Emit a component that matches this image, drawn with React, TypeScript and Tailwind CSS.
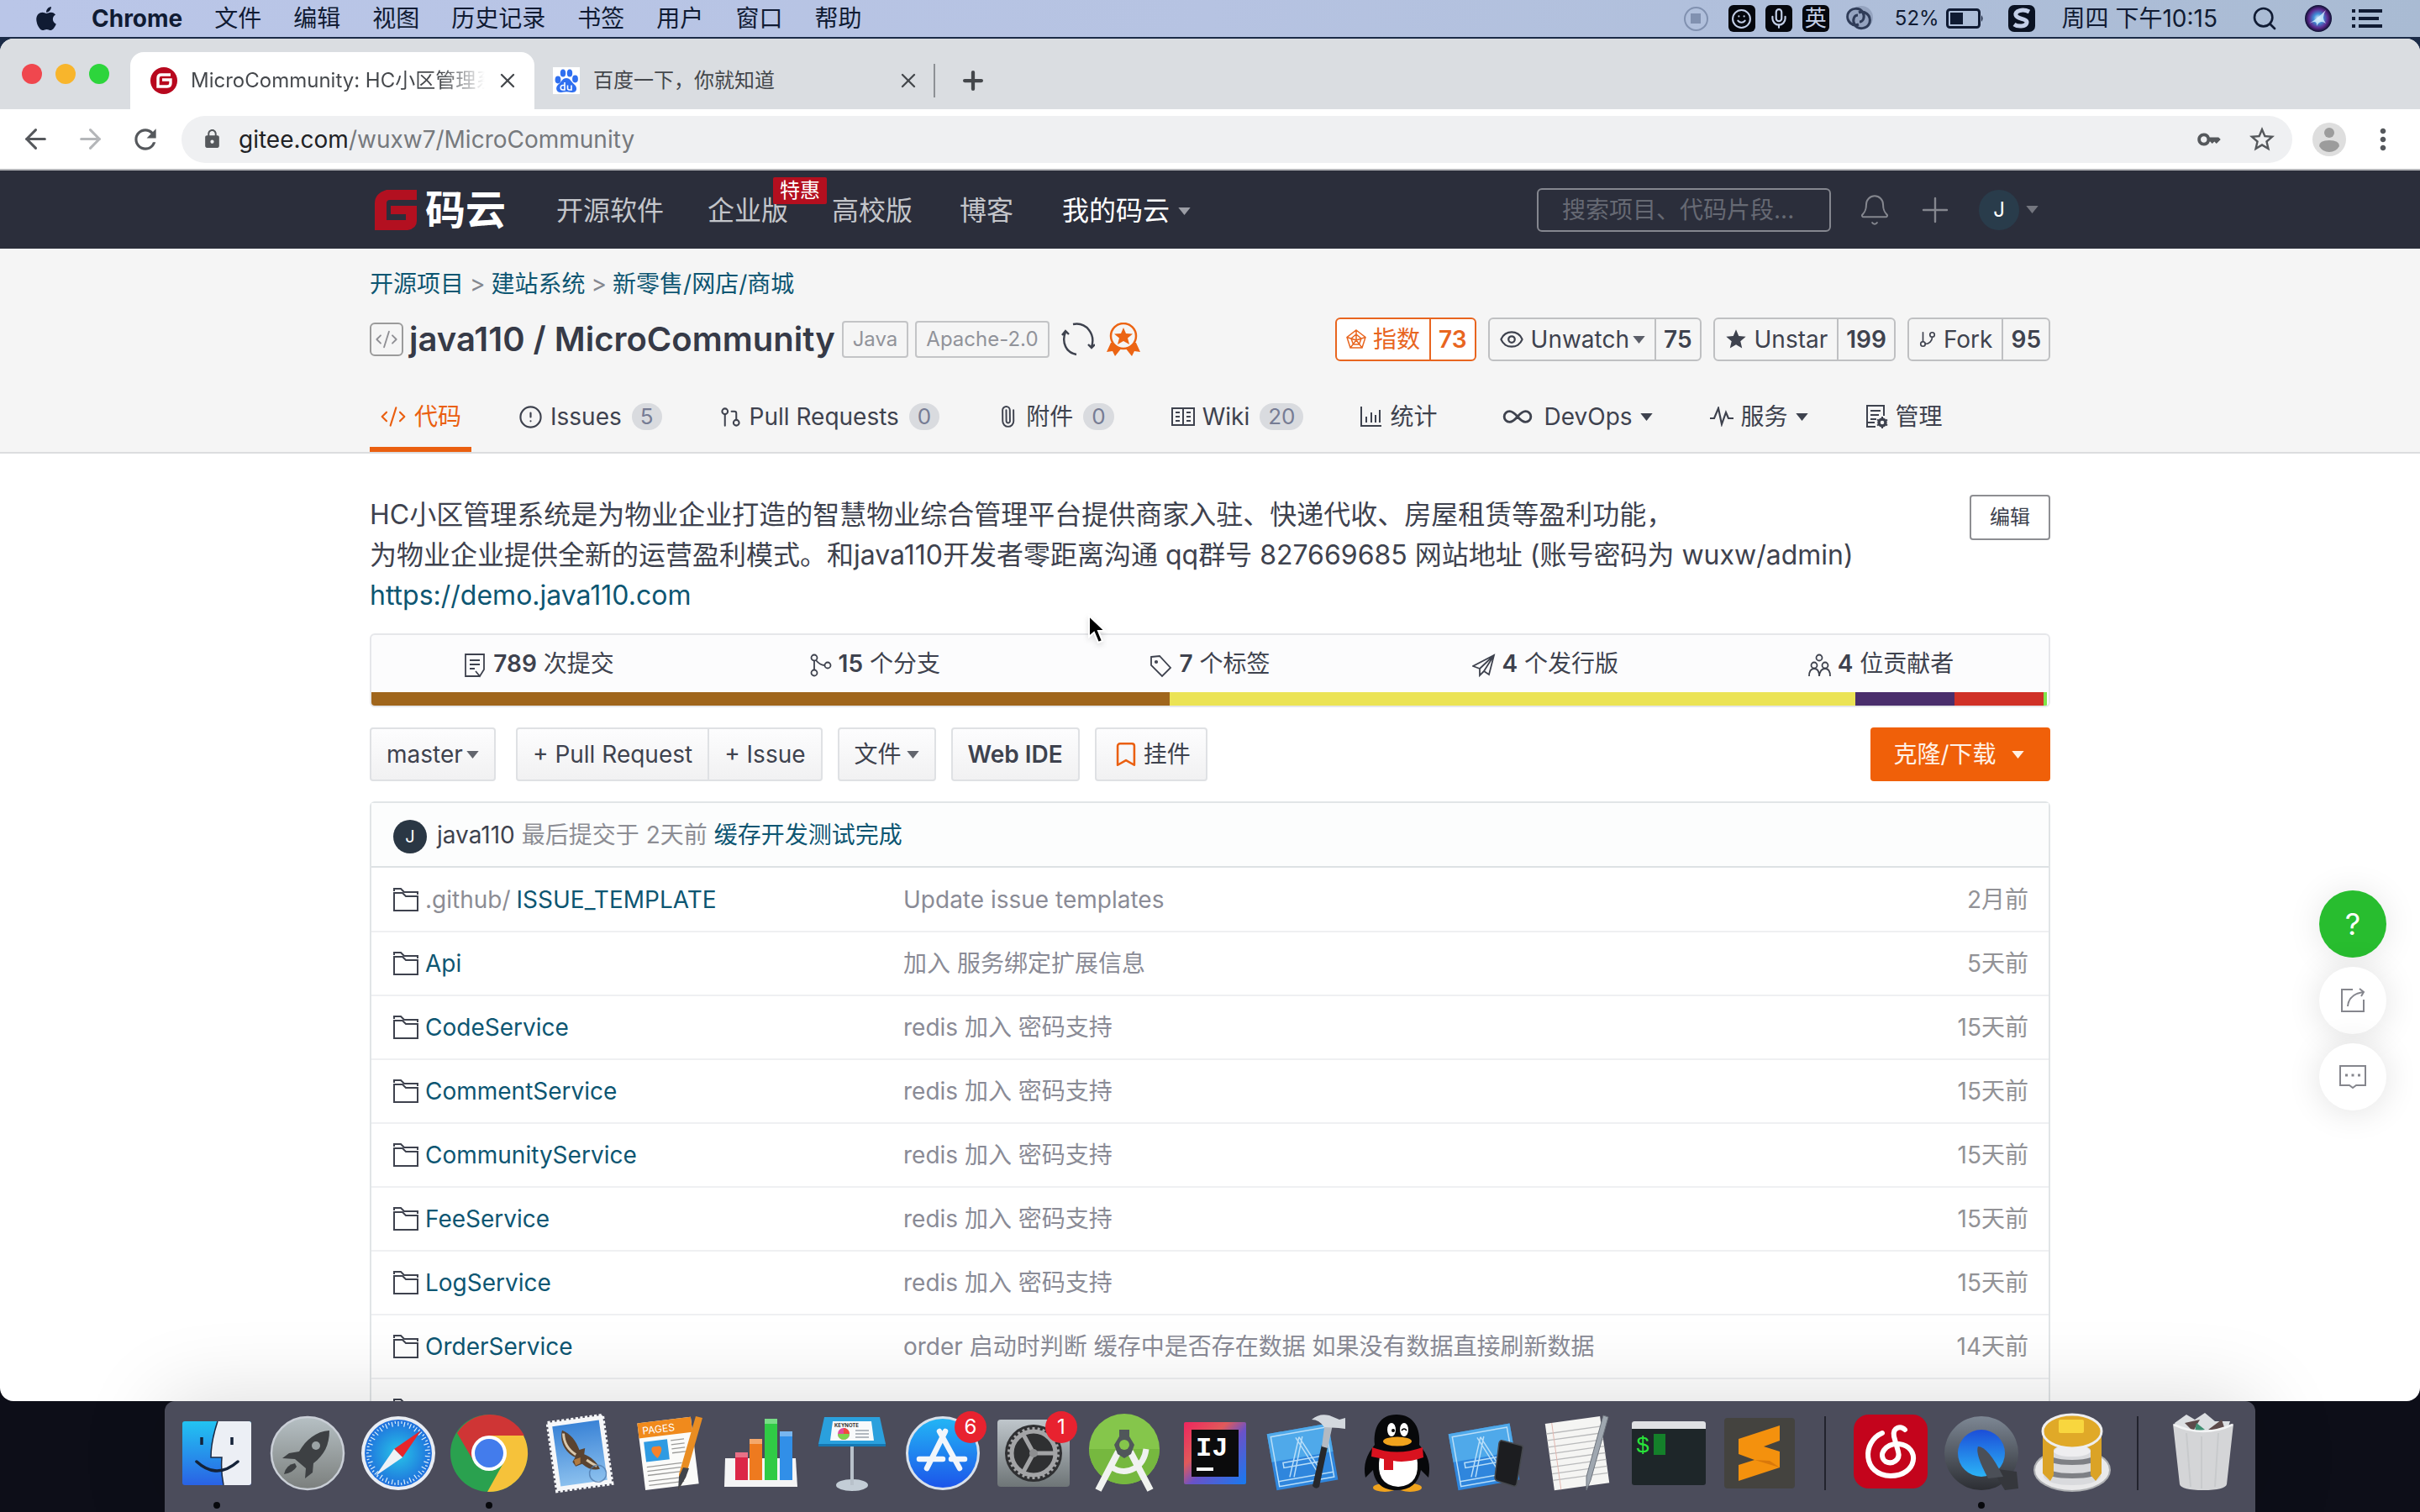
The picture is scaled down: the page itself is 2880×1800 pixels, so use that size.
import type { ReactNode } from "react";
import {
  ArrowLeft,
  ArrowRight,
  Bell,
  Bookmark,
  CircleAlert,
  CodeXml,
  Eye,
  GitBranch,
  GitPullRequest,
  Infinity as InfinityIcon,
  Mic,
  Paperclip,
  Plus,
  Search,
  Smile,
  X
} from "lucide-react";
import { MdKey, MdLock, MdMoreVert, MdRefresh, MdStar, MdStarBorder } from "react-icons/md";
import { FaApple } from "react-icons/fa";

const menus = ["文件", "编辑", "视图", "历史记录", "书签", "用户", "窗口", "帮助"];

const files = [
  { prefix: ".github/", name: "ISSUE_TEMPLATE", message: "Update issue templates", date: "2月前" },
  { name: "Api", message: "加入 服务绑定扩展信息", date: "5天前" },
  { name: "CodeService", message: "redis 加入 密码支持", date: "15天前" },
  { name: "CommentService", message: "redis 加入 密码支持", date: "15天前" },
  { name: "CommunityService", message: "redis 加入 密码支持", date: "15天前" },
  { name: "FeeService", message: "redis 加入 密码支持", date: "15天前" },
  { name: "LogService", message: "redis 加入 密码支持", date: "15天前" },
  { name: "OrderService", message: "order 启动时判断 缓存中是否存在数据 如果没有数据直接刷新数据", date: "14天前" },
  { name: "", message: "", date: "" }
];

const languages = [
  { color: "#a0661c", share: 47.6 },
  { color: "#ebe355", share: 40.9 },
  { color: "#4a2e6c", share: 5.9 },
  { color: "#d03127", share: 5.3 },
  { color: "#7fe64a", share: 0.2 }
];

function Caret({ className = "" }: { className?: string }) {
  return (
    <svg viewBox="0 0 16 10" className={`h-[9px] w-[15px] shrink-0 ${className}`} fill="currentColor" aria-hidden="true">
      <path d="M0 0H16L8 10Z" />
    </svg>
  );
}

/* ---------- system menu bar ---------- */

function MenuBar() {
  return (
    <header className="flex h-11 shrink-0 items-center justify-between bg-gradient-to-r from-[#bac6e8] via-[#b6c3e2] to-[#a9bbd3] text-[28px] leading-none text-[#101b33]">
      <nav className="flex items-center gap-[38px] pl-[39px]">
        <FaApple className="size-8" aria-label="Apple" />
        <span className="font-bold">Chrome</span>
        {menus.map((menu) => (
          <button key={menu} type="button">{menu}</button>
        ))}
      </nav>
      <div className="flex items-center gap-6 pr-[45px]">
        <span className="flex size-[29px] items-center justify-center rounded-full border-2 border-[#8191b0]">
          <span className="size-3 bg-[#8191b0]" />
        </span>
        <div className="flex gap-3">
          <span className="flex size-8 items-center justify-center rounded-md bg-[#05070d] text-[#c3cfe8]"><Smile size={25} /></span>
          <span className="flex size-8 items-center justify-center rounded-md bg-[#05070d] text-[#c3cfe8]"><Mic size={26} /></span>
          <span className="flex size-8 items-center justify-center rounded-md bg-[#05070d] text-[26px] text-[#c3cfe8]">英</span>
          <svg viewBox="0 0 38 32" className="ml-1 h-8 w-[38px]" fill="none" stroke="#2f3c58" strokeWidth="3" aria-hidden="true">
            <circle cx="22" cy="15" r="14" fill="#94a3bf" stroke="none" />
            <path d="M19 23C12 26 4 20 6 11 9 3 20 2 24 9 27 15 24 20 20 20" />
            <path d="M19 9C26 6 34 12 32 21 29 29 18 30 14 23 11 17 14 12 18 12" />
          </svg>
        </div>
        <div className="flex items-center gap-2 text-2xl leading-none">
          52%
          <svg viewBox="0 0 46 24" className="h-6 w-[46px]" aria-hidden="true">
            <rect x="1.5" y="1.5" width="38" height="21" rx="3" fill="none" stroke="#101b33" strokeWidth="3" />
            <rect x="5" y="5" width="15" height="14" fill="#101b33" />
            <path d="M42 8Q45 12 42 16Z" fill="#101b33" />
          </svg>
        </div>
        <svg viewBox="0 0 32 32" className="ml-1 size-8" aria-hidden="true">
          <rect width="32" height="32" rx="7" fill="#0a1222" />
          <path d="M25 8C17 4 8 7 9 12S23 16 22 21 11 26 7 23" fill="none" stroke="#c3cfe8" strokeWidth="5" />
        </svg>
        <span className="mr-4 ml-2">周四 下午10:15</span>
        <Search size={32} strokeWidth={2} />
        <svg viewBox="0 0 32 32" className="ml-2 size-8" aria-hidden="true">
          <defs>
            <radialGradient id="siri">
              <stop offset="0" stopColor="#e9f5ff" />
              <stop offset=".35" stopColor="#3f8fd8" />
              <stop offset=".7" stopColor="#5d2a8f" />
              <stop offset="1" stopColor="#0b1030" />
            </radialGradient>
          </defs>
          <circle cx="16" cy="16" r="16" fill="url(#siri)" />
          <path d="M5 22Q14 17 25 6Q19 15 25 22Q18 17 14 25Q15 17 5 22Z" fill="#d8f1ff" opacity=".8" />
        </svg>
        <svg viewBox="0 0 36 22" className="h-[22px] w-9" fill="#101b33" aria-hidden="true">
          <path d="M0 0H4V4H0ZM8 0H36V4H8ZM0 9H4V13H0ZM8 9H32V13H8ZM0 18H4V22H0ZM8 18H36V22H8Z" />
        </svg>
      </div>
    </header>
  );
}

/* ---------- browser chrome ---------- */

function GiteeMark() {
  return (
    <svg viewBox="0 0 32 32" className="size-8 shrink-0" aria-hidden="true">
      <circle cx="16" cy="16" r="16" fill="#b8081e" />
      <path d="M24 9H13Q9 9 9 13V23H20Q24 23 24 19V15H14" fill="none" stroke="#fff" strokeWidth="3.4" />
    </svg>
  );
}

function BaiduMark() {
  return (
    <svg viewBox="0 0 32 32" className="size-8 shrink-0" aria-hidden="true">
      <rect width="32" height="32" fill="#fff" />
      <g fill="#2f6ff0">
        <ellipse cx="6" cy="15" rx="3.4" ry="4.4" />
        <ellipse cx="12" cy="7" rx="3.2" ry="4.6" />
        <ellipse cx="20" cy="7" rx="3.2" ry="4.6" />
        <ellipse cx="26.5" cy="14" rx="3.4" ry="4.4" />
        <path d="M16 13C11 13 10 18 6 21 2 25 5 31 10 30 14 29 18 29 22 30 28 31 30 25 26 21 22 18 21 13 16 13Z" />
      </g>
      <path d="M14 18V27H12A2.5 2.5 0 0 1 12 21.5H14M17.5 21.5V25Q17.5 27 19.5 27H22V21.5" fill="none" stroke="#fff" strokeWidth="1.6" />
    </svg>
  );
}

function BrowserBar() {
  return (
    <>
      <div className="flex h-[84px] shrink-0 items-end bg-[#dadde1] text-2xl text-[#44474b]">
        <div className="flex h-full w-[155px] items-center gap-4 pl-[26px]">
          <button type="button" aria-label="关闭" className="size-6 rounded-full bg-[#f0474e]" />
          <button type="button" aria-label="最小化" className="size-6 rounded-full bg-[#f8b52c]" />
          <button type="button" aria-label="全屏" className="size-6 rounded-full bg-[#2dd53c]" />
        </div>
        <div className="flex h-[68px] w-[481px] items-center rounded-t-2xl bg-white pr-[18px] pl-6">
          <GiteeMark />
          <span className="ml-4 w-[350px] overflow-hidden bg-gradient-to-r from-[#44474b] from-85% to-transparent bg-clip-text whitespace-nowrap text-transparent">
            MicroCommunity: HC小区管理系统
          </span>
          <button type="button" aria-label="关闭标签页" className="ml-auto"><X size={28} strokeWidth={2} /></button>
        </div>
        <div className="flex h-[68px] w-[475px] items-center pr-4 pl-[22px]">
          <BaiduMark />
          <span className="ml-4">百度一下，你就知道</span>
          <button type="button" aria-label="关闭标签页" className="ml-auto"><X size={28} strokeWidth={2} /></button>
        </div>
        <div className="flex h-[68px] items-center gap-7">
          <span className="h-10 w-[2px] bg-[#8d9095]" />
          <button type="button" aria-label="新标签页"><Plus size={34} strokeWidth={3} /></button>
        </div>
      </div>
      <div className="flex h-[73px] shrink-0 items-center border-b-2 border-[#b6b7bb] bg-white pr-6 text-[#55585c]">
        <div className="flex w-[216px] items-center gap-7 pl-6">
          <button type="button" aria-label="后退"><ArrowLeft size={37} strokeWidth={2} /></button>
          <button type="button" aria-label="前进" className="text-[#b4b6b9]"><ArrowRight size={37} strokeWidth={2} /></button>
          <button type="button" aria-label="重新加载"><MdRefresh size={38} /></button>
        </div>
        <div className="flex h-14 flex-1 items-center rounded-full bg-[#eff0f2] pr-[18px] pl-6">
          <MdLock size={25} />
          <div className="ml-[19px] text-[28px] text-[#76797d]">
            <span className="text-[#202124]">gitee.com</span>/wuxw7/MicroCommunity
          </div>
          <MdKey size={30} className="ml-auto" />
          <MdStarBorder size={36} className="ml-[30px]" />
        </div>
        <svg viewBox="0 0 40 40" className="ml-6 size-10" aria-hidden="true">
          <circle cx="20" cy="20" r="20" fill="#dedede" />
          <circle cx="20" cy="12" r="6" fill="#9c9c9c" />
          <path d="M8 28Q8 21 20 21T32 28Q28 35 20 35T8 28Z" fill="#9c9c9c" />
        </svg>
        <button type="button" aria-label="菜单" className="ml-6"><MdMoreVert size={40} /></button>
      </div>
    </>
  );
}

/* ---------- site header ---------- */

function SiteNav() {
  return (
    <div className="h-[93px] shrink-0 bg-[#2b2e3b]">
      <div className="mx-auto flex h-full max-w-[2000px] items-center pl-[6px] text-[32px] text-[#c3c5ca]">
        <a href="#home" className="flex items-center gap-[10px] text-white">
          <svg viewBox="0 0 50 48" className="h-12 w-[50px]" aria-hidden="true">
            <path d="M50 0H14Q0 4 0 16V48H39Q50 46 50 37V19H19V29H37V36H14V16Q14 12 18 12H50Z" fill="#b31020" />
          </svg>
          <span className="text-5xl leading-none font-semibold">码云</span>
        </a>
        <nav className="ml-[60px] flex gap-[52px] pt-[3px]">
          <a href="#explore">开源软件</a>
          <a href="#enterprise" className="relative">
            企业版
            <span className="absolute -top-[16px] left-[78px] rounded-xs bg-[#b40f1f] px-2 text-2xl leading-8 whitespace-nowrap text-white">特惠</span>
          </a>
          <a href="#education">高校版</a>
          <a href="#blog" className="pl-1">博客</a>
          <button type="button" className="flex items-center gap-[10px] pl-[6px] text-white">
            我的码云<Caret className="text-[#9b9da5]" />
          </button>
        </nav>
        <input
          type="search"
          aria-label="搜索"
          placeholder="搜索项目、代码片段..."
          className="ml-auto h-[52px] w-[350px] rounded-md border-2 border-[#85878f] bg-transparent pr-2 pl-7 text-[28px] text-white placeholder:text-[#666973]"
        />
        <button type="button" aria-label="通知" className="ml-8 text-[#85878f]"><Bell size={40} strokeWidth={1.2} /></button>
        <button type="button" aria-label="新建" className="ml-7 text-[#85878f]"><Plus size={48} strokeWidth={1.2} /></button>
        <button type="button" className="mr-[14px] ml-7 flex items-center gap-2">
          <span className="flex size-12 items-center justify-center rounded-full bg-[#293c4b] text-2xl text-white">J</span>
          <Caret className="text-[#74767f]" />
        </button>
      </div>
    </div>
  );
}

function CountButton({
  icon,
  label,
  count,
  caret,
  accent
}: {
  icon: ReactNode;
  label: string;
  count: string;
  caret?: boolean;
  accent?: boolean;
}) {
  return (
    <div className={`flex h-[52px] items-stretch rounded-md border-2 text-[28px] ${accent ? "border-[#e8651f] bg-white text-[#e8651f]" : "border-[#bfc0c2] text-[#3e424e]"}`}>
      <button type="button" className="flex items-center gap-2 px-[11px]">
        {icon}
        {label}
        {caret && <Caret className="-ml-1 text-[#5b5e68]" />}
      </button>
      <a href="#count" className={`flex items-center border-l-2 px-[9px] font-semibold ${accent ? "border-[#e8651f]" : "border-[#bfc0c2]"}`}>{count}</a>
    </div>
  );
}

function RepoTab({ icon, label, count, active, caret }: { icon: ReactNode; label: string; count?: number; active?: boolean; caret?: boolean }) {
  return (
    <a
      href="#tab"
      className={`flex h-[86px] items-center gap-[9px] border-b-6 px-3 pt-2 ${active ? "border-[#ea5f10] text-[#ea5f10]" : "border-transparent"}`}
    >
      {icon}
      {label}
      {count !== undefined && (
        <span className="ml-[3px] rounded-full bg-[#d9dbdf] px-[10px] text-[26px] leading-8 text-[#767c94]">{count}</span>
      )}
      {caret && <Caret />}
    </a>
  );
}

function RepoHeader() {
  return (
    <div className="shrink-0 border-b-2 border-[#dcdddf] bg-[#f5f5f5]">
      <div className="mx-auto max-w-[2000px] text-[28px] text-[#3e424e]">
        <div className="flex gap-[7px] pt-[21px] leading-[42px] text-[#0d5672]">
          <a href="#c1">开源项目</a>
          <span className="text-[#85888f]">&gt;</span>
          <a href="#c2">建站系统</a>
          <span className="text-[#85888f]">&gt;</span>
          <a href="#c3">新零售/网店/商城</a>
        </div>
        <div className="flex items-center pt-[15px]">
          <span className="flex h-10 w-10 items-center justify-center rounded-md border-2 border-[#9b9b9b] text-[#8f8f94]">
            <CodeXml size={28} strokeWidth={1.6} />
          </span>
          <h1 className="ml-[7px] text-[40px] leading-[60px] font-semibold text-[#363a47]">java110 / MicroCommunity</h1>
          <span className="ml-2 rounded-sm border-2 border-[#c3c4c6] px-[11px] text-2xl leading-10 text-[#91939a]">Java</span>
          <span className="ml-2 rounded-sm border-2 border-[#c3c4c6] px-[11px] text-2xl leading-10 text-[#91939a]">Apache-2.0</span>
          <svg viewBox="0 0 40 40" className="ml-[14px] size-10" fill="none" stroke="#3e424e" strokeWidth="2.4" aria-hidden="true">
            <path d="M18 38C6 36 0 24 5 11M1 15L5 10 9 14M14 2C30-1 41 14 36 29M32 26L36 30 40 26" />
          </svg>
          <svg viewBox="0 0 40 40" className="ml-[14px] size-10" aria-hidden="true">
            <path d="M5 24L0 35 7 34 10 40 18 30H22L30 40 33 34 40 35 35 24Z" fill="#ec6413" />
            <circle cx="20" cy="16" r="15" fill="#f5f5f5" stroke="#ec6413" strokeWidth="2.5" />
            <path d="M20 6L23 13 31 13.5 25 18.5 27 26 20 22 13 26 15 18.5 9 13.5 17 13Z" fill="#ec6413" />
          </svg>
          <div className="ml-auto flex gap-[14px]">
            <CountButton
              accent
              label="指数"
              count="73"
              icon={
                <svg viewBox="0 0 24 24" className="size-6" fill="none" stroke="currentColor" strokeWidth="1.5" aria-hidden="true">
                  <path d="M12 1L23 9.5 19 22H5L1 9.5ZM12 6L18 11 15.5 18H8.5L6 11ZM12 1V13M23 9.5L12 13 19 22M5 22L12 13 1 9.5" />
                </svg>
              }
            />
            <CountButton label="Unwatch" count="75" caret icon={<Eye size={30} strokeWidth={1.8} />} />
            <CountButton label="Unstar" count="199" icon={<MdStar size={28} />} />
            <CountButton label="Fork" count="95" icon={<GitBranch size={22} strokeWidth={1.8} />} />
          </div>
        </div>
        <nav className="flex gap-11 pt-[18px]">
          <RepoTab active label="代码" icon={<CodeXml size={32} strokeWidth={1.6} />} />
          <RepoTab label="Issues" count={5} icon={<CircleAlert size={29} strokeWidth={1.8} />} />
          <RepoTab label="Pull Requests" count={0} icon={<GitPullRequest size={27} strokeWidth={1.8} />} />
          <RepoTab label="附件" count={0} icon={<Paperclip size={26} strokeWidth={1.8} className="-rotate-45" />} />
          <RepoTab
            label="Wiki"
            count={20}
            icon={
              <svg viewBox="0 0 28 22" className="h-[22px] w-7" fill="none" stroke="currentColor" strokeWidth="2" aria-hidden="true">
                <path d="M1 1H27V21H1ZM14 1V21M5 6H10M5 11H10M5 16H10M18 6H23M18 11H23M18 16H23" />
              </svg>
            }
          />
          <RepoTab
            label="统计"
            icon={
              <svg viewBox="0 0 26 26" className="size-[26px]" fill="none" stroke="currentColor" strokeWidth="2" aria-hidden="true">
                <path d="M1 1V24H25M7 13V20M13 8V20M18 11V20M23 5V20" />
              </svg>
            }
          />
          <RepoTab caret label="DevOps" icon={<InfinityIcon size={38} strokeWidth={1.8} className="mr-1 ml-2" />} />
          <RepoTab
            caret
            label="服务"
            icon={
              <svg viewBox="0 0 28 24" className="h-6 w-7" fill="none" stroke="currentColor" strokeWidth="2.2" aria-hidden="true">
                <path d="M0 14H5L10 2 14 21 19 7 22 14H28" />
              </svg>
            }
          />
          <RepoTab
            label="管理"
            icon={
              <svg viewBox="0 0 27 30" className="h-[30px] w-[27px]" fill="none" stroke="currentColor" strokeWidth="2" aria-hidden="true">
                <path d="M12 27H2V2H22V14M6 8H18M6 13H16M6 18H13M2 22H11" />
                <circle cx="20" cy="22" r="4" strokeWidth="3.5" />
                <path d="M20 15V18M20 26V29M14 18.5L16.5 20M24 24L26 25.5M14 25.5L16.5 24M24 20L26 18.5" />
              </svg>
            }
          />
        </nav>
      </div>
    </div>
  );
}

/* ---------- repository body ---------- */

const stats = [
  {
    count: "789",
    label: "次提交",
    icon: <path d="M19 28H2V2H24V20L19 28L14 22M7 9H19M7 14H19M7 19H13" />
  },
  {
    count: "15",
    label: "个分支",
    icon: (
      <>
        <circle cx="6" cy="6" r="3.5" />
        <circle cx="6" cy="24" r="3.5" />
        <circle cx="22" cy="15" r="3.5" />
        <path d="M6 9.5V20.5M8 9Q13 15 18.5 15" />
      </>
    )
  },
  {
    count: "7",
    label: "个标签",
    icon: (
      <>
        <path d="M2 5L12 4 25 18 15 28 2 15Z" />
        <circle cx="8" cy="11" r="1.2" />
      </>
    )
  },
  { count: "4", label: "个发行版", icon: <path d="M9 19L1 16 26 3 20 26 14 22 26 3M9 19L26 3M9 19V27L14 22" /> },
  {
    count: "4",
    label: "位贡献者",
    icon: (
      <>
        <circle cx="13" cy="6" r="3.5" />
        <circle cx="7" cy="15" r="3.5" />
        <circle cx="20" cy="15" r="3.5" />
        <path d="M1 28Q1 19 7 19T13 28Q14 19 20 19T26 28" />
      </>
    )
  }
];

const toolButton =
  "flex h-16 items-center border-2 border-[#dfe1e4] bg-gradient-to-b from-[#fdfdfe] to-[#f1f1f2] px-[18px]";

function FolderIcon() {
  return (
    <svg viewBox="0 0 32 30" className="h-[30px] w-8 shrink-0" fill="none" stroke="#3e424e" strokeWidth="2" aria-hidden="true">
      <path d="M2 5V2H10L14 6H30V9" />
      <path d="M2 28V7H12L16 11H30V28Z" />
    </svg>
  );
}

function RepoBody() {
  return (
    <main className="mx-auto w-full max-w-[2000px] text-[28px] text-[#3e424e]">
      <section className="flex items-start justify-between pt-[49px]">
        <p className="text-[32px] leading-[48px]">
          HC小区管理系统是为物业企业打造的智慧物业综合管理平台提供商家入驻、快递代收、房屋租赁等盈利功能，
          <br />
          为物业企业提供全新的运营盈利模式。和java110开发者零距离沟通 qq群号 827669685 网站地址 (账号密码为 wuxw/admin)
          <br />
          <a href="#demo" className="text-[#0d5672]">https://demo.java110.com</a>
        </p>
        <button type="button" className="h-[54px] rounded-sm border-2 border-[#8d8e92] px-[22px] text-2xl">编辑</button>
      </section>

      <section className="mt-[21px] overflow-hidden rounded-md border-2 border-[#e6e7ea] bg-[#fcfcfd]">
        <div className="grid h-[68px] grid-cols-5 items-center">
          {stats.map((item) => (
            <a key={item.label} href="#stat" className="flex items-center justify-center gap-[7px]">
              <svg viewBox="0 0 28 30" className="mt-1 h-[30px] w-7" fill="none" stroke="currentColor" strokeWidth="1.8" aria-hidden="true">
                {item.icon}
              </svg>
              <span><b className="font-semibold">{item.count}</b> {item.label}</span>
            </a>
          ))}
        </div>
        <div className="flex h-4">
          {languages.map((lang) => (
            <span key={lang.color} style={{ width: `${lang.share}%`, backgroundColor: lang.color }} />
          ))}
        </div>
      </section>

      <section className="mt-6 flex">
        <div className={`${toolButton} rounded-sm`}>
          <select aria-label="分支" className="appearance-none bg-transparent">
            <option>master</option>
          </select>
          <Caret className="ml-1 text-[#62656d]" />
        </div>
        <button type="button" className={`${toolButton} ml-6 rounded-l-sm`}>+ Pull Request</button>
        <button type="button" className={`${toolButton} rounded-r-sm border-l-0`}>+ Issue</button>
        <button type="button" className={`${toolButton} ml-[18px] gap-[6px] rounded-sm`}>文件<Caret className="text-[#62656d]" /></button>
        <button type="button" className={`${toolButton} ml-[18px] rounded-sm font-semibold`}>Web IDE</button>
        <button type="button" className={`${toolButton} ml-[18px] gap-1 rounded-sm`}>
          <Bookmark size={34} strokeWidth={1.8} className="text-[#ea5f10]" />
          挂件
        </button>
        <button type="button" className="ml-auto flex h-16 w-[214px] items-center justify-center gap-[18px] rounded-sm bg-[#f06009] pr-1 text-[#fff1e6]">
          克隆/下载<Caret />
        </button>
      </section>

      <section className="mt-6 rounded-t-md border-2 border-[#e1e5e7]">
        <div className="flex h-[77px] items-center gap-2 border-b-2 border-[#dde2e4] bg-[#fcfdfd] px-[26px]">
          <span className="mt-1 mr-1 flex size-10 items-center justify-center rounded-full bg-[#2a3744] text-xl text-white">J</span>
          <a href="#user">java110</a>
          <span className="text-[#8c8d94]">最后提交于 2天前</span>
          <a href="#commit" className="text-[#0d5672]">缓存开发测试完成</a>
        </div>
        <table className="w-full table-fixed border-collapse text-left">
          <tbody>
            {files.map((file) => (
              <tr key={file.name} className="h-19 border-b-2 border-[#eff0f2]">
                <td className="w-[633px] pl-[25px]">
                  <a href="#file" className="flex items-center gap-[7px] text-[#0d5672]">
                    <FolderIcon />
                    {file.prefix && <span className="text-[#8c8d94]">{file.prefix}</span>}
                    {file.name}
                  </a>
                </td>
                <td className="text-[#8a8b96]">{file.message}</td>
                <td className="w-[200px] pr-6 text-right text-[#929296]">{file.date}</td>
              </tr>
            ))}
          </tbody>
        </table>
      </section>
    </main>
  );
}

function FloatingTools() {
  return (
    <div className="absolute right-10 top-[1060px] flex flex-col gap-[11px] text-[#85868d]">
      <button type="button" className="size-20 rounded-full bg-[#28bd2f] text-[36px] text-white shadow-[0_2px_40px_rgba(0,0,0,0.1)]">?</button>
      <button type="button" aria-label="分享" className="flex size-20 items-center justify-center rounded-full bg-white shadow-[0_2px_40px_rgba(0,0,0,0.12)]">
        <svg viewBox="0 0 30 30" className="size-[30px]" fill="none" stroke="currentColor" strokeWidth="2" aria-hidden="true">
          <path d="M15 2H2V28H28V14M9 22Q10 8 27 5M23 1L28 5 25 10" />
        </svg>
      </button>
      <button type="button" aria-label="留言" className="flex size-20 items-center justify-center rounded-full bg-white shadow-[0_2px_40px_rgba(0,0,0,0.12)]">
        <svg viewBox="0 0 32 28" className="h-7 w-8" fill="none" stroke="currentColor" strokeWidth="2" aria-hidden="true">
          <path d="M1 1H31V24H20L16 27 12 24H1Z" />
          <path d="M7 12H10M14.5 12H17.5M22 12H25" strokeWidth="3" />
        </svg>
      </button>
    </div>
  );
}

/* ---------- dock ---------- */

function DrawingSheet() {
  return (
    <g transform="rotate(-10 46 52)">
      <rect x="7" y="18" width="74" height="68" fill="#2f86dd" />
      <rect x="7" y="18" width="74" height="34" fill="#4fa9ea" />
      <g fill="none" stroke="#b9def8" strokeWidth="1.5">
        <rect x="11" y="22" width="66" height="60" />
        <path d="M44 28L25 73M44 28L63 73M20 55H68V61H20ZM48 28L30 74M40 28L59 74M11 76H77" />
      </g>
    </g>
  );
}

const teeth = Array.from({ length: 30 }, (_, i) => i * 12);

const dockIcons: Record<string, ReactNode> = {
  Finder: (
    <>
      <rect x="7" y="10" width="82" height="76" rx="3" fill="url(#finderBlue)" />
      <path d="M49 10C44 25 41 40 41 53H54C53 65 54 76 56 86H86Q89 86 89 83V13Q89 10 86 10Z" fill="#eceff5" />
      <path d="M49 10C44 25 41 40 41 53H54C53 65 54 76 56 86" fill="none" stroke="#1a2a44" strokeWidth="1.5" />
      <path d="M30 29V38M66 29V38" stroke="#142238" strokeWidth="3.5" />
      <path d="M24 58Q48 80 73 58" fill="none" stroke="#142238" strokeWidth="3.5" strokeLinecap="round" />
    </>
  ),
  Launchpad: (
    <>
      <circle cx="48" cy="48" r="43" fill="url(#launch)" stroke="#c9ced6" strokeWidth="2.5" />
      <path d="M74 21C58 22 46 32 38 46L26 48 18 54 33 55 46 66 45 78 54 71 55 60C68 50 74 38 74 21Z" fill="#3d4043" />
      <circle cx="58" cy="39" r="5" fill="#9ba3a5" />
      <path d="M33 60Q22 62 20 73Q31 71 35 64Z" fill="#3d4043" />
    </>
  ),
  Safari: (
    <>
      <circle cx="48" cy="48" r="44" fill="#e9edf3" />
      <circle cx="48" cy="48" r="40" fill="url(#safari)" />
      {teeth.map((angle) => (
        <path key={angle} d="M48 10V16M52 10V13" stroke="#dff1fb" strokeWidth="1.2" transform={`rotate(${angle} 48 48)`} />
      ))}
      <path d="M75 21L43 43 53 53Z" fill="#e8262a" />
      <path d="M21 75L43 43 53 53Z" fill="#eef2f6" />
    </>
  ),
  Chrome: (
    <>
      <circle cx="48" cy="48" r="46" fill="#2aa14f" />
      <path d="M48 27H89A46 46 0 0 1 46 94L66 58Z" fill="#f6c23a" />
      <path d="M48 2A46 46 0 0 1 90 27H48L30 58 10 24A46 46 0 0 1 48 2Z" fill="#cf3535" />
      <circle cx="48" cy="48" r="21" fill="#fff" />
      <circle cx="48" cy="48" r="17" fill="#437cec" />
    </>
  ),
  Mail: (
    <g transform="rotate(-8 48 48)">
      <rect x="15" y="7" width="66" height="82" fill="#f6f7f9" stroke="#f6f7f9" strokeWidth="4" strokeDasharray="3.2 2.4" />
      <rect x="20" y="12" width="56" height="72" fill="url(#sky)" />
      <path d="M31 18C26 30 30 44 42 52L38 57 41 63 49 61C55 68 62 71 69 70C67 61 60 54 53 50L55 43 48 44C46 33 40 23 31 18Z" fill="#5a4330" />
      <path d="M32 22C31 32 35 42 43 49M55 57Q60 62 66 66" fill="none" stroke="#d9c8ac" strokeWidth="3" />
      <path d="M40 55L48 53 47 60 41 62Z" fill="#b07a3f" />
      <circle cx="66" cy="75" r="10" fill="none" stroke="#4a74a5" strokeWidth="1.5" opacity=".7" />
    </g>
  ),
  Pages: (
    <>
      <g transform="rotate(-7 48 48)">
        <rect x="13" y="8" width="64" height="80" fill="#fbfbf9" />
        <rect x="13" y="8" width="64" height="18" fill="#f08a1c" />
        <text x="18" y="22" fontSize="12" fill="#fff">PAGES</text>
        <rect x="18" y="31" width="28" height="24" fill="#2f9be2" />
        <path d="M32 52C24 44 24 36 32 38C40 36 40 44 32 52Z" fill="#f5822a" />
        <path d="M50 33H66M50 38H66M50 43H66M50 48H66M18 61H60M18 66H58M18 71H60M18 78H56M18 83H60" stroke="#9b9b99" strokeWidth="1.3" />
      </g>
      <path d="M78 4L86 6 66 76 58 90 58 73Z" fill="#e98d22" />
      <path d="M63 65L70 66 66 77 57 92 58 76Z" fill="#41444a" />
    </>
  ),
  Numbers: (
    <>
      <path d="M5 54H89L91 88H4Z" fill="#f4f4f5" />
      <rect x="17" y="47" width="15" height="33" fill="#dc2647" />
      <rect x="34" y="31" width="15" height="49" fill="#ee7a1f" />
      <rect x="52" y="7" width="15" height="73" fill="#30cb45" />
      <rect x="70" y="22" width="15" height="58" fill="#318fe8" />
      <path d="M17 47H32V53H17ZM34 31H49V37H34ZM52 7H67V13H52ZM70 22H85V28H70Z" fill="#fff" opacity=".35" />
    </>
  ),
  Keynote: (
    <>
      <ellipse cx="48" cy="86" rx="19" ry="7" fill="#c3cdd6" />
      <rect x="46" y="38" width="4" height="48" fill="#b8c1ca" />
      <path d="M15 5H81L88 37V40H8V37Z" fill="#2aa0dd" />
      <path d="M8 37H88V40H8Z" fill="#1577b3" />
      <path d="M25 10H71L74 33H22Z" fill="#f8fafb" />
      <text x="27" y="17" fontSize="6" fontWeight="700" fill="#333">KEYNOTE</text>
      <circle cx="38" cy="25" r="7" fill="#e24b9c" />
      <path d="M38 18A7 7 0 0 1 45 25H38Z" fill="#f04b3c" />
      <path d="M31 25A7 7 0 0 0 45 25H38Z" fill="#7ed34c" />
      <path d="M52 21H68M52 25H68M52 29H68" stroke="#9aa4ad" strokeWidth="1.5" />
    </>
  ),
  "App Store": (
    <>
      <circle cx="48" cy="48" r="44" fill="#d9e1ea" />
      <circle cx="48" cy="48" r="41" fill="url(#store)" />
      <path d="M51 22L29 66M44 22L68 66M20 55H48M58 55H74" stroke="#f1f6fb" strokeWidth="6.5" strokeLinecap="round" />
    </>
  ),
  Settings: (
    <>
      <rect x="5" y="8" width="86" height="80" rx="4" fill="url(#metal)" />
      <circle cx="48" cy="48" r="34" fill="#2f3032" />
      <circle cx="48" cy="48" r="26" fill="none" stroke="#a3a4a6" strokeWidth="5" />
      {teeth.map((angle) => (
        <path key={angle} d="M48 17V23" stroke="#a3a4a6" strokeWidth="3" transform={`rotate(${angle} 48 48)`} />
      ))}
      <path d="M48 48L36 26M48 48H73M48 48L36 70" stroke="#a3a4a6" strokeWidth="5" />
      <circle cx="48" cy="48" r="5" fill="#8d8e90" />
    </>
  ),
  "Android Studio": (
    <>
      <circle cx="48" cy="43" r="42" fill="#85c64b" />
      <path d="M6 43A42 42 0 0 0 90 43Z" fill="#76b83f" />
      <path d="M41 46L17 92M55 46L79 92" stroke="#f0f2f0" strokeWidth="8" />
      <path d="M32 64Q46 74 60 66Q72 59 74 43" fill="none" stroke="#f0f2f0" strokeWidth="7" />
      <path d="M42 20H54V28L60 38 56 49 48 54 40 49 36 38 42 28Z" fill="#50575a" />
      <circle cx="48" cy="38" r="6" fill="#85c64b" />
    </>
  ),
  IntelliJ: (
    <>
      <rect x="11" y="11" width="74" height="74" rx="2" fill="url(#idea)" />
      <rect x="20" y="20" width="56" height="56" fill="#0b0b0c" />
      <text x="25" y="51" fontSize="32" fontWeight="700" fill="#fff" className="font-['Liberation_Mono']">IJ</text>
      <rect x="26" y="65" width="20" height="4" fill="#fff" />
    </>
  ),
  Xcode: (
    <>
      <DrawingSheet />
      <path d="M67 38L74 40 64 88Q60 92 56 87Z" fill="#26282c" />
      <path d="M71 10L80 14 74 42 67 40Z" fill="#b4bac2" />
      <path d="M55 8Q64 0 76 3L88 8 95 6V19L87 18 70 17Q64 8 55 8Z" fill="#d3d8de" />
    </>
  ),
  QQ: (
    <>
      <ellipse cx="34" cy="89" rx="14" ry="5" fill="#f0a31d" />
      <ellipse cx="64" cy="89" rx="14" ry="5" fill="#f0a31d" />
      <path d="M48 2C28 2 20 18 22 38C12 50 8 62 11 77L20 68C22 84 32 92 48 92S74 84 77 68L86 77C89 62 86 50 75 38C77 18 68 2 48 2Z" fill="#07080a" />
      <path d="M28 52H72Q78 86 50 88Q22 86 28 52Z" fill="#fff" />
      <ellipse cx="42" cy="20" rx="5" ry="8" fill="#fff" />
      <ellipse cx="57" cy="20" rx="5" ry="8" fill="#fff" />
      <circle cx="44" cy="21" r="2" />
      <path d="M54 21Q57 17 60 21" fill="none" stroke="#000" strokeWidth="1.5" />
      <ellipse cx="49" cy="34" rx="17" ry="5.5" fill="#f0a31d" />
      <path d="M19 41Q48 52 79 41L80 53Q60 60 44 57V68H33V55L18 52Z" fill="#d8121f" />
    </>
  ),
  Simulator: (
    <>
      <DrawingSheet />
      <path d="M66 33L89 39Q91 40 90 43L83 85Q82 88 79 87L60 81Q57 80 57 77L62 36Q63 32 66 33Z" fill="#1c1d20" stroke="#45484d" strokeWidth="1.5" />
    </>
  ),
  TextEdit: (
    <>
      <g transform="rotate(-8 48 48)">
        <rect x="14" y="8" width="66" height="80" fill="#f5f5f3" />
        <path d="M14 20H80M14 28H80M14 36H80M14 44H80M14 52H80M14 60H80M14 68H80M14 76H80" stroke="#b9babb" strokeWidth="1.3" />
        <path d="M22 8V88" stroke="#e3b7b0" strokeWidth="1" />
      </g>
      <path d="M78 3L84 5 63 80 58 92 58 76Z" fill="#9fa7b0" stroke="#6d747d" strokeWidth="1" />
    </>
  ),
  Terminal: (
    <>
      <rect x="4" y="10" width="88" height="76" rx="3" fill="#1e2629" />
      <path d="M4 19V13Q4 10 7 10H89Q92 10 92 13V19Z" fill="#dfe1e4" />
      <text x="9" y="47" fontSize="27" fill="#28e339" className="font-['Liberation_Mono']">$</text>
      <rect x="30" y="25" width="14" height="25" fill="#14802a" />
    </>
  ),
  Sublime: (
    <>
      <rect x="6" y="6" width="84" height="84" rx="4" fill="#44433f" />
      <path d="M23 31L72 15V33L53 40 72 46V65L23 81V62L42 56 23 49Z" fill="#f4910d" />
      <path d="M42 56L72 65 60 57Z" fill="#d9780a" />
    </>
  ),
  "NetEase Music": (
    <>
      <rect x="4" y="2" width="88" height="88" rx="18" fill="#c4041c" />
      <path
        d="M38 24C14 34 14 74 48 75C80 75 84 40 58 37C42 36 32 50 42 58C50 62 60 56 57 46L52 28C50 17 60 15 65 20"
        fill="none"
        stroke="#fff"
        strokeWidth="6"
        strokeLinecap="round"
      />
    </>
  ),
  QuickTime: (
    <>
      <circle cx="48" cy="48" r="44" fill="url(#qtRing)" />
      <path d="M60 66L90 70 92 90 76 92Z" fill="#35373c" />
      <circle cx="48" cy="48" r="28" fill="url(#qtBlue)" />
      <path d="M44 40Q56 40 74 76L56 78Q40 48 44 40Z" fill="#4b4f57" />
    </>
  ),
  "Sequel Pro": (
    <>
      <ellipse cx="48" cy="68" rx="45" ry="25" fill="#e9e9ea" stroke="#aeb0b3" strokeWidth="2" />
      <path d="M14 22V76Q20 86 48 86T82 76V22Z" fill="#d9dadd" />
      <path d="M14 44Q20 56 48 56T82 44V52Q78 62 48 62T14 52ZM14 62Q20 72 48 72T82 62V69Q78 78 48 78T14 69Z" fill="#7e8085" />
      <path d="M13 22V72L22 81 26 74V44Q30 38 48 38T70 44V74L76 81 83 72V22Z" fill="#dba326" />
      <path d="M26 46Q30 38 48 38T70 46Q66 52 48 52T26 46Z" fill="#eeeef0" />
      <ellipse cx="48" cy="22" rx="35" ry="20" fill="#e0a928" stroke="#eeeeef" strokeWidth="3" />
      <rect x="32" y="8" width="30" height="16" rx="2" fill="#f8d63e" />
    </>
  ),
  Trash: (
    <>
      <path d="M14 12L28 2 38 8 50 0 62 10 80 10 76 22H18Z" fill="#dcdfe2" />
      <path d="M26 12L36 22 44 8ZM54 20L70 8 74 20Z" fill="#5d4a4a" />
      <path d="M40 12L50 20 38 22Z" fill="#3f8f72" />
      <path d="M12 13Q48 30 84 13L76 85Q74 92 48 92T20 85Z" fill="#d4d5d7" />
      <path d="M13 14Q48 30 83 14" fill="none" stroke="#f2f3f4" strokeWidth="2.5" />
      <path d="M28 24L33 88M66 24L62 88M46 28V90" stroke="#c8cacc" strokeWidth="2" />
    </>
  )
};

const dockGroups = [
  ["Finder", "Launchpad", "Safari", "Chrome", "Mail", "Pages", "Numbers", "Keynote", "App Store", "Settings", "Android Studio", "IntelliJ", "Xcode", "QQ", "Simulator", "TextEdit", "Terminal", "Sublime"],
  ["NetEase Music", "QuickTime", "Sequel Pro"],
  ["Trash"]
];
const running = ["Finder", "Chrome", "QuickTime"];
const dockBadges: Record<string, number> = { "App Store": 6, Settings: 1 };

function DockGradients() {
  return (
    <svg className="absolute size-0" aria-hidden="true">
      <defs>
        <linearGradient id="finderBlue" x2="0" y2="1"><stop stopColor="#22c4f2" /><stop offset="1" stopColor="#2a62e4" /></linearGradient>
        <linearGradient id="launch" x2="0" y2="1"><stop stopColor="#b6c0c4" /><stop offset="1" stopColor="#7b7f7d" /></linearGradient>
        <radialGradient id="safari"><stop stopColor="#27c5e8" /><stop offset="1" stopColor="#1f6fdc" /></radialGradient>
        <linearGradient id="sky" x2="0" y2="1"><stop stopColor="#3a83d6" /><stop offset="1" stopColor="#8bc0ee" /></linearGradient>
        <linearGradient id="store" x2="0" y2="1"><stop stopColor="#23b5f5" /><stop offset="1" stopColor="#1c55ea" /></linearGradient>
        <linearGradient id="metal" x2="0" y2="1"><stop stopColor="#bfc6cb" /><stop offset="1" stopColor="#6e7577" /></linearGradient>
        <linearGradient id="idea" x2="1" y2="1">
          <stop stopColor="#f0255e" />
          <stop offset=".35" stopColor="#e05a5a" />
          <stop offset=".55" stopColor="#6a52c8" />
          <stop offset="1" stopColor="#167bf0" />
        </linearGradient>
        <linearGradient id="qtRing" x2="0" y2="1"><stop stopColor="#7d8794" /><stop offset="1" stopColor="#2c2e33" /></linearGradient>
        <linearGradient id="qtBlue" x2="0" y2="1"><stop stopColor="#1c4ed8" /><stop offset="1" stopColor="#2bb4f7" /></linearGradient>
      </defs>
    </svg>
  );
}

function Dock() {
  return (
    <footer className="relative z-10 mx-auto flex h-[132px] shrink-0 rounded-t-xl bg-[#4b4c5b] px-2 pt-[14px] shadow-[0_0_100px_rgba(0,0,0,0.15)]">
      <DockGradients />
      {dockGroups.map((group, index) => (
        <div key={group[0]} className="flex">
          {index > 0 && <span className="mx-[23px] mt-1 h-[88px] w-[2px] bg-[#22232d]" />}
          {group.map((name) => (
            <button key={name} type="button" aria-label={name} className="relative flex w-27 flex-col items-center">
              <svg viewBox="0 0 96 96" className="size-24" aria-hidden="true">{dockIcons[name]}</svg>
              {dockBadges[name] && (
                <span className="absolute -top-[2px] right-[2px] size-[38px] rounded-full bg-[#e8222f] text-center text-2xl leading-[38px] text-white">
                  {dockBadges[name]}
                </span>
              )}
              {running.includes(name) && <span className="mt-[10px] size-2 rounded-full bg-[#07080c]" />}
            </button>
          ))}
        </div>
      ))}
    </footer>
  );
}

export default function App() {
  return (
    <div className="relative flex h-screen flex-col overflow-hidden bg-[#0d0e18] font-['Inter','Noto_Sans_CJK_SC',sans-serif]">
      <MenuBar />
      <div className="flex min-h-0 flex-1 flex-col bg-[linear-gradient(#1b2b47_50%,#0d0e18_50%)] pt-[2px]">
        <div className="flex min-h-0 flex-1 flex-col overflow-hidden rounded-2xl bg-white">
          <BrowserBar />
          <SiteNav />
          <RepoHeader />
          <RepoBody />
        </div>
      </div>
      <Dock />
      <FloatingTools />
      <svg viewBox="0 0 24 36" className="absolute top-[731px] left-[1294px] h-9 w-6 drop-shadow-md" aria-hidden="true">
        <path d="M2 2V27L8 22 13 34 18 32 13 20H21Z" fill="#000" stroke="#fff" strokeWidth="2" />
      </svg>
    </div>
  );
}
